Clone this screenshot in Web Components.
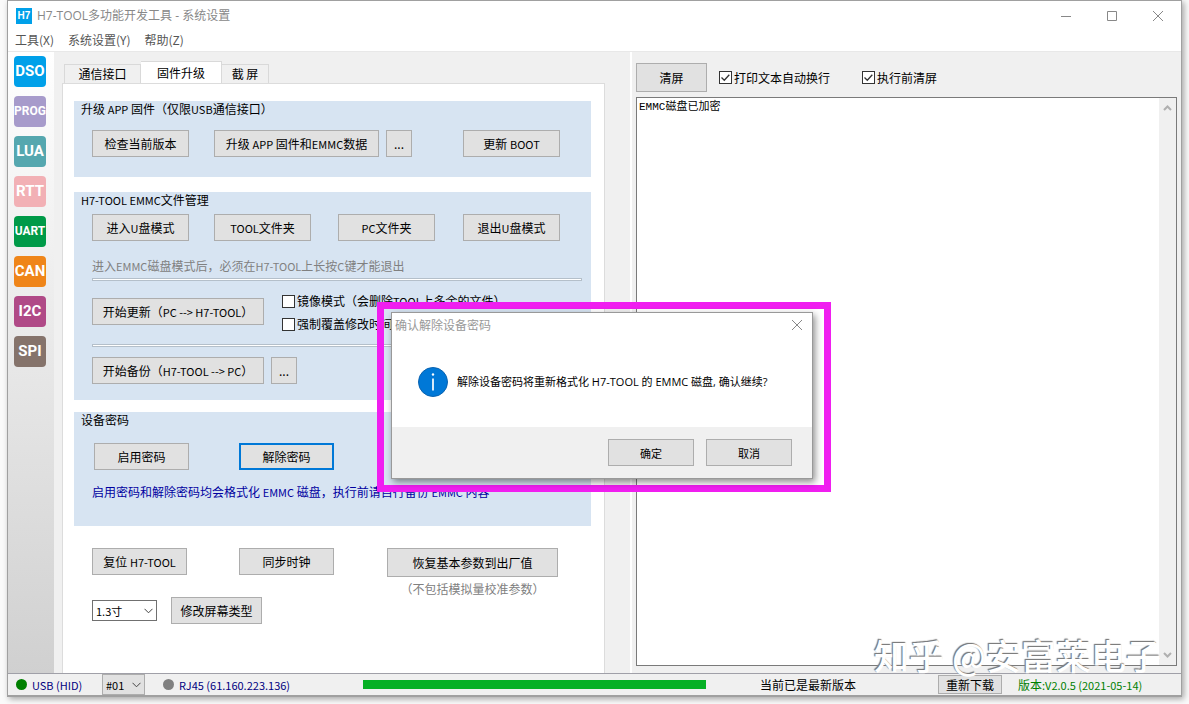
<!DOCTYPE html>
<html lang="zh-CN">
<head>
<meta charset="utf-8">
<title>H7-TOOL多功能开发工具</title>
<style>
body{
    margin: 0;
    background: #fafafa;
    font: 12px/16px "Noto Sans CJK SC", sans-serif;
    color: #000
}
</style>
</head>
<body>
<h7-app></h7-app>

<script>
// latin runs are one size smaller than the chinese text around them
const base = `
*{
    box-sizing: border-box
}
small{
    font-size: 11px
}
button, select, textarea, input{
    font: inherit;
    color: inherit;
    margin: 0
}
`

class BaseElement extends HTMLElement{
    constructor(){
        super();
        this._shadowroot = this.attachShadow({mode:'open'})
    }
    render(style, html){
        this._shadowroot.innerHTML = `<style>${base}${style}</style>${html}`
    }
}

class PushButton extends BaseElement{
    connectedCallback(){
        this.render(`
        :host{
            display: block;
            height: 27px
        }
        :host([tall]){
            height: 29px
        }
        :host([flat]){
            height: 19px
        }
        button{
            display: block;
            width: 100%;
            height: 100%;
            padding: 0;
            border: 1px solid #adadad;
            background: #e1e1e1;
            white-space: nowrap
        }
        :host([focused]) button{
            border: 2px solid #0078d7
        }
        `, `<button type="button"><slot></slot></button>`)
    }
}

class CheckBox extends BaseElement{
    connectedCallback(){
        const checked = this.hasAttribute('checked') ? 'checked' : ''
        this.render(`
        :host{
            display: block
        }
        label{
            display: flex;
            align-items: center;
            gap: 2px;
            white-space: nowrap
        }
        .box{
            display: grid;
            width: 13px;
            height: 13px
        }
        input, svg{
            grid-area: 1 / 1
        }
        input{
            appearance: none;
            width: 13px;
            height: 13px;
            border: 1px solid #333;
            background: #fff
        }
        svg{
            display: none;
            pointer-events: none
        }
        input:checked + svg{
            display: block
        }
        `, `
        <label>
            <span class="box">
                <input type="checkbox" ${checked}>
                <svg width="13" height="13" viewBox="0 0 13 13" fill="none" stroke="#333" stroke-width="1.3"><path d="M2.5 6.5l2.8 2.8 5-5.6"/></svg>
            </span>
            <span><slot></slot></span>
        </label>
        `)
    }
}

class DropDown extends BaseElement{
    connectedCallback(){
        const value = this.getAttribute('value')
        this.render(`
        :host{
            display: grid;
            align-items: center;
            height: 21px
        }
        select, svg{
            grid-area: 1 / 1
        }
        select{
            appearance: none;
            width: 100%;
            height: 100%;
            padding: 0 0 0 3px;
            border: 1px solid #707070;
            border-radius: 0;
            background: #fff;
            font-size: 11px
        }
        :host([flat]) select{
            border-color: #adadad;
            background: #e1e1e1
        }
        svg{
            justify-self: end;
            margin-right: 4px;
            pointer-events: none
        }
        `, `
        <select aria-label="${this.getAttribute('label')}"><option>${value}</option></select>
        <svg width="9" height="6" viewBox="0 0 9 6" fill="none" stroke="#444"><path d="M.5 .8l4 4 4-4"/></svg>
        `)
    }
}

class GroupBox extends BaseElement{
    connectedCallback(){
        this.render(`
        :host{
            display: block
        }
        fieldset{
            margin: 0;
            padding: 0 0 0 18px;
            border: 0;
            background: #d7e4f2
        }
        legend{
            float: left;
            width: 100%;
            margin-left: -11px;
            padding: 0
        }
        .content{
            clear: both
        }
        `, `
        <fieldset>
            <legend><slot name="title"></slot></legend>
            <div class="content"><slot></slot></div>
        </fieldset>
        `)
    }
}

class ToolIcon extends BaseElement{
    connectedCallback(){
        this.render(`
        :host{
            display: block
        }
        button{
            display: block;
            width: 32px;
            height: 31px;
            padding: 0;
            border: 0;
            border-radius: 4px;
            background: var(--tool-color);
            color: #fff;
            font: bold 15px/31px Roboto, "Liberation Sans", sans-serif
        }
        :host([long]) button{
            font-size: 12px
        }
        `, `<button type="button"><slot></slot></button>`)
    }
}

class TitleBar extends BaseElement{
    connectedCallback(){
        this.render(`
        :host{
            display: flex;
            align-items: center;
            height: 29px;
            padding: 0 17px 0 8px;
            color: #888;
            font-family: "Open Sans", "Noto Sans CJK SC", sans-serif
        }
        .logo{
            width: 16px;
            height: 16px;
            margin-right: 5px;
            background: #00a0e9;
            color: #fff;
            font: bold 10px/16px "Liberation Sans", sans-serif;
            text-align: center
        }
        .title{
            flex: 1
        }
        .controls{
            display: flex;
            gap: 34px
        }
        button{
            display: block;
            width: 12px;
            height: 12px;
            padding: 0;
            border: 0;
            background: none
        }
        svg{
            display: block
        }
        `, `
        <span class="logo">H7</span>
        <span class="title">H7-TOOL多功能开发工具 - 系统设置</span>
        <div class="controls">
            <button type="button" aria-label="最小化"><svg width="12" height="12" stroke="#888"><path d="M1 6.5h10"/></svg></button>
            <button type="button" aria-label="最大化"><svg width="12" height="12" stroke="#888" fill="none"><path d="M1.5 1.5h9v9h-9z"/></svg></button>
            <button type="button" aria-label="关闭"><svg width="12" height="12" stroke="#888"><path d="M1 1l10 10M11 1L1 11"/></svg></button>
        </div>
        `)
    }
}

class MenuBar extends BaseElement{
    connectedCallback(){
        this.render(`
        :host{
            display: flex;
            gap: 14px;
            height: 22px;
            padding: 2px 0 0 7px;
            border-bottom: 1px solid #e8e8e8
        }
        a{
            color: #555;
            text-decoration: none
        }
        `, `
        <a href="#">工具(X)</a>
        <a href="#">系统设置(Y)</a>
        <a href="#">帮助(Z)</a>
        `)
    }
}

class ToolBar extends BaseElement{
    connectedCallback(){
        this.render(`
        :host{
            display: flex;
            flex-direction: column;
            gap: 9px;
            width: 46px;
            padding: 4px 0 0 6px;
            background: linear-gradient(#fff, #d0d0d0)
        }
        `, `
        <tool-icon style="--tool-color:#00a0e9">DSO</tool-icon>
        <tool-icon long style="--tool-color:#a79bcb">PROG</tool-icon>
        <tool-icon style="--tool-color:#55a7af">LUA</tool-icon>
        <tool-icon style="--tool-color:#f2b0b5">RTT</tool-icon>
        <tool-icon long style="--tool-color:#009a48">UART</tool-icon>
        <tool-icon style="--tool-color:#ef8519">CAN</tool-icon>
        <tool-icon style="--tool-color:#b04a87">I2C</tool-icon>
        <tool-icon style="--tool-color:#85736b">SPI</tool-icon>
        `)
    }
}

class TabStrip extends BaseElement{
    connectedCallback(){
        this.render(`
        :host{
            display: flex;
            align-items: flex-end;
            height: 22px;
            padding-left: 2px
        }
        button{
            height: 19px;
            padding: 0 12px;
            border: 1px solid #d9d9d9;
            border-bottom: 0;
            background: #f0f0f0;
            white-space: pre
        }
        button + button{
            border-left: 0
        }
        .wide{
            width: 77px
        }
        .narrow{
            width: 47px;
            padding: 0
        }
        .active{
            width: 81px;
            height: 22px;
            background: #fff
        }
        `, `
        <button type="button" class="wide">通信接口</button>
        <button type="button" class="active">固件升级</button>
        <button type="button" class="narrow">截 屏</button>
        `)
    }
}

class FirmwarePage extends BaseElement{
    connectedCallback(){
        this.render(`
        :host{
            display: block;
            padding: 17px 13px 20px 11px;
            border: 1px solid #dcdcdc;
            border-bottom: 0;
            background: #fff
        }
        .row{
            display: grid;
            grid-template-columns: 122px 124px 125px 1fr;
            align-items: center
        }
        .flex{
            display: flex;
            align-items: center;
            gap: 7px
        }
        .span{
            grid-column: span 2
        }
        .first{
            padding: 13px 0 20px
        }
        .folders{
            padding-top: 6px
        }
        .password{
            grid-template-columns: 145px 1fr;
            padding: 15px 0 14px 2px
        }
        .b95{
            width: 95px
        }
        .b97{
            width: 97px
        }
        .b172{
            width: 172px
        }
        .b26{
            width: 26px
        }
        .hint{
            margin: 0;
            padding: 17px 0 4px;
            color: #808080
        }
        hr{
            height: 3px;
            margin: 0 9px 0 0;
            border: 1px solid #b4bfca;
            background: #fff
        }
        .update{
            gap: 18px;
            padding: 10px 0 12px
        }
        .checks{
            display: grid;
            gap: 7px;
            padding-top: 2px
        }
        .backup{
            padding: 10px 0 16px
        }
        .note{
            margin: 0;
            padding-bottom: 26px;
            color: #0000a0;
            white-space: nowrap
        }
        group-box + group-box{
            margin-top: 15px
        }
        group-box.last{
            margin-top: 12px
        }
        .reset{
            display: grid;
            grid-template-columns: 147px 148px 171px;
            padding: 22px 0 0 18px
        }
        .reset p{
            grid-column: 3;
            margin: 4px 0 0;
            color: #808080;
            text-align: center
        }
        .screen{
            gap: 14px;
            padding-left: 18px
        }
        `, `
        <group-box>
            <span slot="title">升级 <small>APP</small> 固件（仅限<small>USB</small>通信接口）</span>
            <div class="row first">
                <push-button class="b97">检查当前版本</push-button>
                <div class="flex span">
                    <push-button style="width:165px">升级 <small>APP</small> 固件和<small>EMMC</small>数据</push-button>
                    <push-button class="b26">...</push-button>
                </div>
                <push-button class="b97">更新 <small>BOOT</small></push-button>
            </div>
        </group-box>

        <group-box>
            <span slot="title"><small>H7-TOOL EMMC</small>文件管理</span>
            <div class="row folders">
                <push-button class="b97">进入<small>U</small>盘模式</push-button>
                <push-button class="b97"><small>TOOL</small>文件夹</push-button>
                <push-button class="b97"><small>PC</small>文件夹</push-button>
                <push-button class="b97">退出<small>U</small>盘模式</push-button>
            </div>
            <p class="hint">进入<small>EMMC</small>磁盘模式后，必须在<small>H7-TOOL</small>上长按<small>C</small>键才能退出</p>
            <hr>
            <div class="flex update">
                <push-button class="b172">开始更新（<small>PC --&gt; H7-TOOL</small>）</push-button>
                <div class="checks">
                    <check-box>镜像模式（会删除<small>TOOL</small>上多余的文件）</check-box>
                    <check-box>强制覆盖修改时间</check-box>
                </div>
            </div>
            <hr>
            <div class="flex backup">
                <push-button class="b172">开始备份（<small>H7-TOOL --&gt; PC</small>）</push-button>
                <push-button class="b26">...</push-button>
            </div>
        </group-box>

        <group-box class="last">
            <span slot="title">设备密码</span>
            <div class="row password">
                <push-button class="b95">启用密码</push-button>
                <push-button class="b95" focused>解除密码</push-button>
            </div>
            <p class="note">启用密码和解除密码均会格式化 <small>EMMC</small> 磁盘，执行前请自行备份 <small>EMMC</small> 内容</p>
        </group-box>

        <div class="reset">
            <push-button class="b95">复位 <small>H7-TOOL</small></push-button>
            <push-button class="b95">同步时钟</push-button>
            <push-button tall>恢复基本参数到出厂值</push-button>
            <p>（不包括模拟量校准参数）</p>
        </div>
        <div class="flex screen">
            <drop-down style="width:65px" label="屏幕尺寸" value="1.3寸"></drop-down>
            <push-button style="width:91px">修改屏幕类型</push-button>
        </div>
        `)
    }
}

class LogPanel extends BaseElement{
    connectedCallback(){
        this.render(`
        :host{
            display: flex;
            flex-direction: column;
            padding: 11px 4px 7px 4px;
            border-left: 2px solid #fff
        }
        .bar{
            display: flex;
            align-items: center;
            gap: 12px;
            margin-bottom: 5px
        }
        push-button{
            width: 71px
        }
        check-box + check-box{
            margin-left: 20px
        }
        .log{
            flex: 1;
            display: flex;
            border: 1px solid #7a7a7a;
            background: #fff
        }
        textarea{
            flex: 1;
            padding: 1px 2px;
            border: 0;
            outline: 0;
            resize: none;
            background: none;
            font-family: "Liberation Mono", "Noto Sans CJK SC", monospace;
            font-size: 11px
        }
        .scroll{
            display: flex;
            flex-direction: column;
            justify-content: space-between;
            align-items: center;
            width: 17px;
            padding: 7px 0;
            background: #f0f0f0
        }
        `, `
        <div class="bar">
            <push-button tall>清屏</push-button>
            <check-box checked>打印文本自动换行</check-box>
            <check-box checked>执行前清屏</check-box>
        </div>
        <div class="log">
            <textarea aria-label="日志" spellcheck="false">EMMC磁盘已加密</textarea>
            <div class="scroll">
                <svg width="9" height="6" fill="none" stroke="#b0b0b0" stroke-width="2"><path d="M1 5l3.500-3.500L8 5"/></svg>
                <svg width="9" height="6" fill="none" stroke="#b0b0b0" stroke-width="2"><path d="M1 1l3.500 3.500L8 1"/></svg>
            </div>
        </div>
        `)
    }
}

class StatusBar extends BaseElement{
    connectedCallback(){
        this.render(`
        :host{
            display: grid;
            grid-template-columns: 94px 61px 200px 1fr 54px 178px 80px 163px;
            align-items: center;
            height: 22px;
            border-top: 1px solid #a0a0a8;
            background: #f0f0f0;
            white-space: nowrap
        }
        .link{
            display: flex;
            align-items: center;
            gap: 5px;
            color: #000080;
            font-size: 11px
        }
        .link::before{
            content: "";
            width: 11px;
            height: 11px;
            border-radius: 50%;
            background: #808080
        }
        .usb{
            padding-left: 8px
        }
        .usb::before{
            background: #008000
        }
        progress{
            appearance: none;
            display: block;
            width: 100%;
            height: 9px;
            border: 0
        }
        progress::-webkit-progress-bar{
            background: #e6e6e6
        }
        progress::-webkit-progress-value{
            background: #06b025
        }
        .message{
            grid-column: 6
        }
        .version{
            color: #008000
        }
        `, `
        <span class="link usb">USB (HID)</span>
        <drop-down flat style="width:43px" label="设备" value="#01"></drop-down>
        <span class="link">RJ45 (61.160.223.136)</span>
        <progress value="100" max="100" aria-label="进度"></progress>
        <span class="message">当前已是最新版本</span>
        <push-button flat style="width:64px">重新下载</push-button>
        <span class="version">版本<small>:V2.0.5 (2021-05-14)</small></span>
        `)
    }
}

class ConfirmDialog extends BaseElement{
    connectedCallback(){
        this.render(`
        :host{
            display: block;
            width: 454px;
            padding: 3px 11px 6px 7px;
            border: 7px solid #f01ef0
        }
        .dialog{
            border: 1px solid #999;
            background: #fff;
            box-shadow: 2px 3px 7px rgba(0,0,0,.45)
        }
        .title{
            display: flex;
            align-items: center;
            justify-content: space-between;
            height: 24px;
            padding: 0 9px 0 3px;
            color: #999
        }
        .close{
            display: block;
            width: 12px;
            height: 12px;
            padding: 0;
            border: 0;
            background: none
        }
        svg{
            display: block
        }
        .body{
            display: flex;
            align-items: center;
            gap: 9px;
            height: 90px;
            padding: 0 0 0 26px;
            font-family: "Open Sans", "Noto Sans CJK SC", sans-serif;
            font-size: 11px;
            white-space: nowrap
        }
        .buttons{
            display: flex;
            justify-content: flex-end;
            gap: 12px;
            padding: 12px 20px 12px;
            background: #f0f0f0;
            font-size: 11px
        }
        push-button{
            width: 86px
        }
        `, `
        <div class="dialog" role="dialog" aria-label="确认解除设备密码">
            <div class="title">
                <span>确认解除设备密码</span>
                <button type="button" class="close" aria-label="关闭"><svg width="12" height="12" stroke="#888"><path d="M1 1l10 10M11 1L1 11"/></svg></button>
            </div>
            <div class="body">
                <svg width="30" height="30" viewBox="0 0 30 30">
                    <circle cx="15" cy="15" r="14.500" fill="#0078d7" stroke="#0a63b0"/>
                    <path d="M15 11.500v12" stroke="#fff" stroke-width="1.700"/>
                    <circle cx="15" cy="7.500" r="1.200" fill="#fff"/>
                </svg>
                <span>解除设备密码将重新格式化 H7-TOOL 的 EMMC 磁盘, 确认继续?</span>
            </div>
            <div class="buttons">
                <push-button>确定</push-button>
                <push-button>取消</push-button>
            </div>
        </div>
        `)
    }
}

class H7App extends BaseElement{
    connectedCallback(){
        this.render(`
        :host{
            display: flex;
            flex-direction: column;
            box-sizing: border-box;
            min-height: 100vh;
            padding: 0 7px 7px 7px
        }
        .window{
            flex: 1;
            display: flex;
            flex-direction: column;
            border: 1px solid #a0a0a0;
            border-width: 1px 1px 2px;
            background: #fff;
            box-shadow: 2px 2px 6px rgba(0,0,0,.35)
        }
        .main{
            flex: 1;
            display: flex
        }
        .left{
            display: flex;
            flex-direction: column;
            width: 576px;
            padding: 9px 25px 0 8px;
            background: #f0f0f0
        }
        firmware-page{
            flex: 1
        }
        log-panel{
            flex: 1;
            background: #f0f0f0
        }
        /* floats over the form and the log */
        confirm-dialog{
            position: absolute;
            left: 377px;
            top: 302px
        }
        .watermark{
            position: absolute;
            right: 28px;
            bottom: 27px;
            color: #fff;
            font-size: 35px;
            font-weight: 500;
            line-height: 44px;
            text-shadow: -1px -1px 1px #777, -1px -1px 1px #aaa;
            pointer-events: none
        }
        `, `
        <div class="window">
            <title-bar></title-bar>
            <menu-bar></menu-bar>
            <div class="main">
                <tool-bar></tool-bar>
                <div class="left">
                    <tab-strip></tab-strip>
                    <firmware-page></firmware-page>
                </div>
                <log-panel></log-panel>
            </div>
            <status-bar></status-bar>
        </div>
        <confirm-dialog></confirm-dialog>
        <div class="watermark">知乎 @安富莱电子</div>
        `)
    }
}

window.customElements.define('push-button',PushButton)
window.customElements.define('check-box',CheckBox)
window.customElements.define('drop-down',DropDown)
window.customElements.define('group-box',GroupBox)
window.customElements.define('tool-icon',ToolIcon)
window.customElements.define('title-bar',TitleBar)
window.customElements.define('menu-bar',MenuBar)
window.customElements.define('tool-bar',ToolBar)
window.customElements.define('tab-strip',TabStrip)
window.customElements.define('firmware-page',FirmwarePage)
window.customElements.define('log-panel',LogPanel)
window.customElements.define('status-bar',StatusBar)
window.customElements.define('confirm-dialog',ConfirmDialog)
window.customElements.define('h7-app',H7App)
</script>
</body>
</html>
